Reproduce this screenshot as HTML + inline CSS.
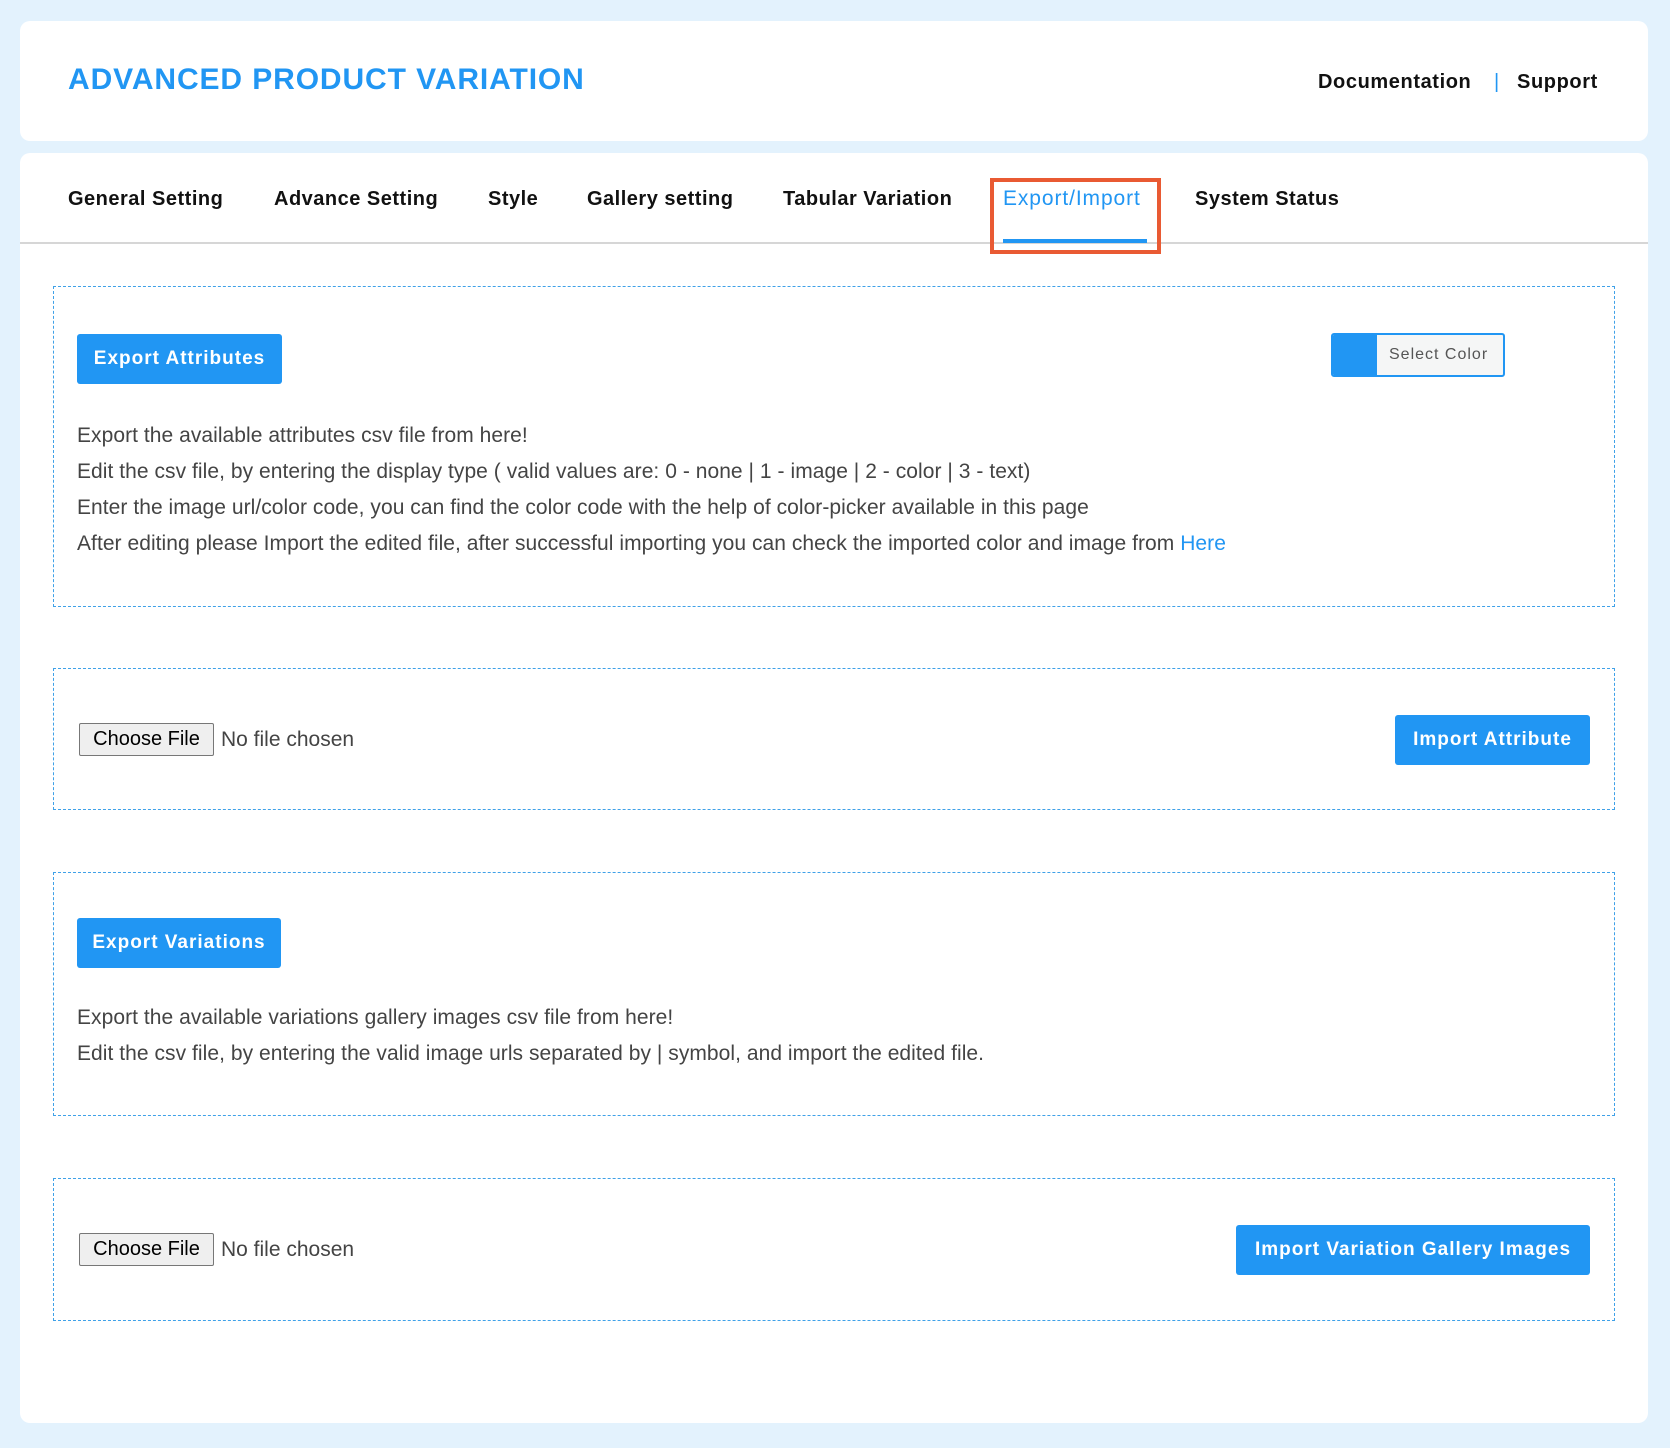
<!DOCTYPE html>
<html><head><style>
*{box-sizing:border-box;margin:0;padding:0}
body{width:1670px;height:1448px;background:#e3f2fd;font-family:"Liberation Sans",sans-serif;position:relative;overflow:hidden}
.card{position:absolute;left:20px;width:1628px;background:#fff;border-radius:10px}
.abs{position:absolute;white-space:nowrap}
.title{left:68px;top:63px;font-size:30px;font-weight:bold;color:#2196f3;letter-spacing:0.9px}
.nav{font-size:20px;font-weight:bold;color:#111;letter-spacing:0.6px}
.tab{top:188px;font-size:20px;font-weight:bold;color:#111;letter-spacing:0.5px}
.box{position:absolute;left:53px;width:1562px;border:1px dashed #3fa1e8}
.btn{position:absolute;background:#2196f3;color:#fff;font-size:19px;font-weight:bold;letter-spacing:1px;border-radius:3px;display:flex;align-items:center;justify-content:center}
.txt{font-size:21px;color:#444;left:77px;letter-spacing:0.05px}
.cf{position:absolute;left:79px;width:135px;height:33px;border:1px solid #777;background:#efefef;border-radius:2px;font-size:20px;color:#000;display:flex;align-items:center;justify-content:center}
.nf{position:absolute;left:221px;font-size:21px;color:#444}
</style></head><body>
<div class="card" style="top:21px;height:120px"></div>
<div class="abs title">ADVANCED PRODUCT VARIATION</div>
<div class="abs nav" style="left:1318px;top:71px">Documentation</div>
<div class="abs" style="left:1494px;top:71px;font-size:20px;color:#2196f3">|</div>
<div class="abs nav" style="left:1517px;top:71px">Support</div>

<div class="card" style="top:153px;height:1270px"></div>
<div class="abs" style="left:20px;top:242px;width:1628px;height:2px;background:#d6d6d6"></div>
<div class="abs tab" style="left:68px">General Setting</div>
<div class="abs tab" style="left:274px">Advance Setting</div>
<div class="abs tab" style="left:488px">Style</div>
<div class="abs tab" style="left:587px">Gallery setting</div>
<div class="abs tab" style="left:783px">Tabular Variation</div>
<div class="abs tab" style="left:1003px;color:#2196f3;font-weight:normal;font-size:21px;letter-spacing:0.9px;top:187px">Export/Import</div>
<div class="abs tab" style="left:1195px">System Status</div>
<div class="abs" style="left:1003px;top:239px;width:144px;height:4px;background:#2196f3"></div>
<div class="abs" style="left:990px;top:178px;width:171px;height:76px;border:4px solid #e95a33"></div>

<div class="box" style="top:286px;height:321px"></div>
<div class="btn" style="left:77px;top:334px;width:205px;height:50px">Export Attributes</div>
<div class="abs" style="left:1331px;top:333px;width:174px;height:44px;border:2px solid #2196f3;border-radius:3px;background:#f5f6f6;overflow:hidden">
<div style="position:absolute;left:0;top:0;width:44px;height:100%;background:#2196f3"></div>
<div style="position:absolute;left:56px;top:11px;font-size:16px;color:#555;letter-spacing:1px">Select Color</div></div>
<div class="abs txt" style="top:424px">Export the available attributes csv file from here!</div>
<div class="abs txt" style="top:460px">Edit the csv file, by entering the display type ( valid values are: 0 - none | 1 - image | 2 - color | 3 - text)</div>
<div class="abs txt" style="top:496px">Enter the image url/color code, you can find the color code with the help of color-picker available in this page</div>
<div class="abs txt" style="top:532px">After editing please Import the edited file, after successful importing you can check the imported color and image from <span style="color:#2196f3">Here</span></div>

<div class="box" style="top:668px;height:142px"></div>
<div class="cf" style="top:723px">Choose File</div>
<div class="nf" style="top:728px">No file chosen</div>
<div class="btn" style="left:1395px;top:715px;width:195px;height:50px">Import Attribute</div>

<div class="box" style="top:872px;height:244px"></div>
<div class="btn" style="left:77px;top:918px;width:204px;height:50px">Export Variations</div>
<div class="abs txt" style="top:1006px">Export the available variations gallery images csv file from here!</div>
<div class="abs txt" style="top:1042px">Edit the csv file, by entering the valid image urls separated by | symbol, and import the edited file.</div>

<div class="box" style="top:1178px;height:143px"></div>
<div class="cf" style="top:1233px">Choose File</div>
<div class="nf" style="top:1238px">No file chosen</div>
<div class="btn" style="left:1236px;top:1225px;width:354px;height:50px">Import Variation Gallery Images</div>
</body></html>
